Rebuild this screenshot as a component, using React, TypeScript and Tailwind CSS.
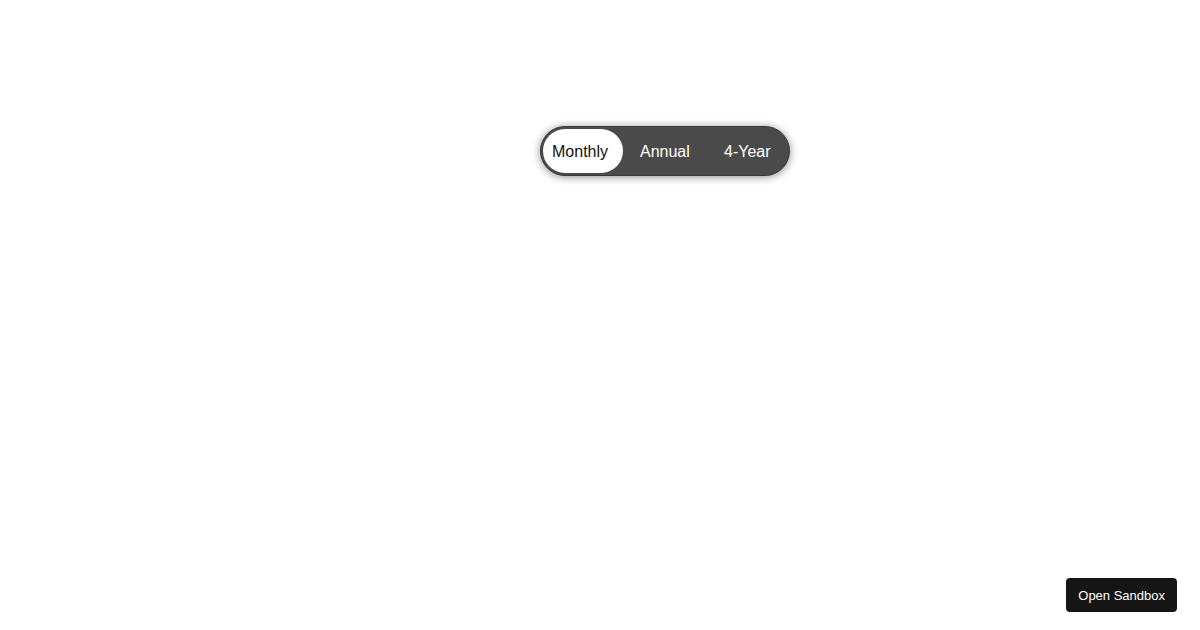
import React, { useState } from 'react';

const options = [
  { label: 'Monthly', cls: 'w-[80px] pl-[9px]' },
  { label: 'Annual', cls: 'w-[84px] pl-[17px]' },
  { label: '4-Year', cls: 'w-[80px] pl-[17px]' },
];

export default function App() {
  const [active, setActive] = useState(0);

  return (
    <div className="relative h-[630px] w-full bg-white font-['Liberation_Sans',Arial,sans-serif]">
      <div className="pt-[126px] pl-[540px]">
        {/* segmented toggle */}
        <div className="flex h-[50px] w-[250px] items-center rounded-full border border-[#3a3a3a] bg-[#4a4a4a] p-[2px] shadow-[0_1px_8px_rgba(0,0,0,0.45)]">
          {options.map((opt, i) => (
            <button
              key={opt.label}
              onClick={() => setActive(i)}
              className={
                'flex h-[44px] items-center rounded-full pt-[2px] text-[16px] ' +
                opt.cls +
                (active === i ? ' bg-white text-[#111]' : ' text-white')
              }
            >
              {opt.label}
            </button>
          ))}
        </div>
      </div>

      <button className="absolute right-[23px] bottom-[18px] h-[34px] rounded-[4px] bg-[#151515] px-3 pt-[1px] text-[13px] text-white">
        Open Sandbox
      </button>
    </div>
  );
}
